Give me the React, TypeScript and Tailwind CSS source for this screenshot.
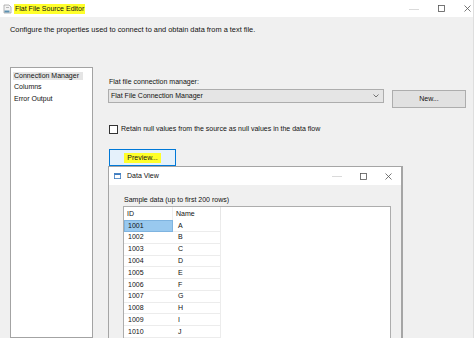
import React from "react";

const rows: [string, string][] = [
  ["1001", "A"],
  ["1002", "B"],
  ["1003", "C"],
  ["1004", "D"],
  ["1005", "E"],
  ["1006", "F"],
  ["1007", "G"],
  ["1008", "H"],
  ["1009", "I"],
  ["1010", "J"],
];

function Controls({ gap }: { gap: string }) {
  return (
    <div className={`flex items-center ${gap}`}>
      <svg width="10" height="6" viewBox="0 0 10 6">
        <line x1="0" y1="3.5" x2="10" y2="3.5" stroke="#d0d0d0" strokeWidth="0.8" />
      </svg>
      <svg width="7" height="7" viewBox="0 0 7 7">
        <rect x="0.5" y="0.5" width="6" height="6" fill="none" stroke="#555" strokeWidth="0.8" />
      </svg>
      <svg width="7" height="7" viewBox="0 0 7 7">
        <path d="M0.5 0.5 L6.5 6.5 M6.5 0.5 L0.5 6.5" stroke="#555" strokeWidth="0.8" />
      </svg>
    </div>
  );
}

export default function App() {
  return (
    <div className="w-[474px] h-[338px] overflow-hidden bg-[#f0f0f0] flex flex-col text-[7px] leading-[10px] text-[#111] font-['Liberation_Sans',Arial,sans-serif] border-r border-[#dedede]">
      {/* title bar */}
      <div className="h-[17px] bg-white flex items-center shrink-0">
        <svg className="ml-[3px]" width="10" height="10" viewBox="0 0 10 10">
          <path d="M1 1 H6 L8 3 V9 H1 Z" fill="#f4f4f4" stroke="#9a9a9a" strokeWidth="0.7" />
          <rect x="1.5" y="6.5" width="5" height="2" fill="#5b8fb0" />
          <rect x="3" y="3" width="3" height="0.8" fill="#aaa" />
        </svg>
        <span className="ml-[1px] bg-[#ffff2a] px-[1px] leading-[10px]">Flat File Source Editor</span>
        <div className="ml-auto mr-[2px]">
          <Controls gap="gap-[19px]" />
        </div>
      </div>

      {/* description */}
      <div className="h-[26px] shrink-0 flex items-center pl-[10px] text-[7.4px]">
        Configure the properties used to connect to and obtain data from a text file.
      </div>

      {/* body */}
      <div className="flex flex-1 min-h-0 mt-[24px]">
        {/* left list */}
        <div className="ml-[10px] w-[83px] bg-white border border-[#a3a3a3] pt-[4px] pl-[2px] pr-[9px] shrink-0">
          <div className="bg-[#e5e5e5] h-[8px] leading-[8px] pl-[1px]">Connection Manager</div>
          <div className="h-[12px] leading-[12px] mt-[1px] pl-[1px]">Columns</div>
          <div className="h-[12px] leading-[11px] pl-[1px]">Error Output</div>
        </div>

        {/* right column */}
        <div className="ml-[15px] flex-1 flex flex-col">
          <div className="mt-[10px] h-[10px] pl-[1px]">Flat file connection manager:</div>
          <div className="mt-[2px] flex items-start">
            <div className="w-[276px] h-[14px] bg-[#e5e5e5] border border-[#adadad] flex items-center pl-[2px]">
              <span>Flat File Connection Manager</span>
              <svg className="ml-auto mr-[4px]" width="6" height="4" viewBox="0 0 6 4">
                <path d="M0.5 0.5 L3 3 L5.5 0.5" fill="none" stroke="#555" strokeWidth="0.8" />
              </svg>
            </div>
            <div className="ml-[8px] mt-[1px] w-[74px] h-[18px] bg-[#e1e1e1] border border-[#adadad] flex items-center justify-center">
              New...
            </div>
          </div>

          <div className="mt-[16px] flex items-center pl-[1px]">
            <div className="w-[9px] h-[9px] bg-white border border-[#333]" />
            <span className="ml-[3px]">Retain null values from the source as null values in the data flow</span>
          </div>

          <div className="mt-[15px] ml-[1px] w-[67px] h-[18px] bg-[#e5f1fb] border border-[#0078d7] flex items-center justify-center">
            <span className="bg-[#ffff2a] px-[3px] leading-[10px]">Preview...</span>
          </div>

          {/* Data View window */}
          <div className="w-[295px] flex-1 bg-[#f0f0f0] border border-[#a5a5a5] border-r-2 border-b-0 flex flex-col">
            <div className="h-[18px] bg-white flex items-center shrink-0">
              <svg className="ml-[5px]" width="7" height="6" viewBox="0 0 7 6">
                <rect x="0.4" y="0.4" width="6.2" height="5.2" fill="#fff" stroke="#3e7cc0" strokeWidth="0.8" />
                <rect x="0.4" y="0.4" width="6.2" height="1.6" fill="#3e7cc0" />
              </svg>
              <span className="ml-[6px]">Data View</span>
              <div className="ml-auto mr-[9px]">
                <Controls gap="gap-[18px]" />
              </div>
            </div>
            <div className="mt-[10px] h-[10px] pl-[15px]">Sample data (up to first 200 rows)</div>
            <div className="mt-[1px] ml-[14px] w-[268px] flex-1 bg-white border border-[#adadad] border-b-0">
              <div className="flex h-[13px] items-center">
                <div className="w-[49px] pl-[3px] h-full flex items-center border-r border-[#eeeeee]">ID</div>
                <div className="w-[48px] pl-[3px] h-full flex items-center border-r border-[#e6e6e6]">Name</div>
              </div>
              {rows.map(([id, name], i) => (
                <div key={id} className="flex h-[11.78px] items-stretch">
                  <div
                    className={
                      i === 0
                        ? "w-[49px] pl-[3px] flex items-center bg-[#99c9ef] border border-[#7fb4e0]"
                        : "w-[49px] pl-[4px] flex items-center border-b border-[#ececec]"
                    }
                  >
                    {id}
                  </div>
                  <div className="w-[48px] pl-[5px] flex items-center border-b border-r border-[#ececec]">{name}</div>
                </div>
              ))}
            </div>
          </div>
        </div>
      </div>
    </div>
  );
}
